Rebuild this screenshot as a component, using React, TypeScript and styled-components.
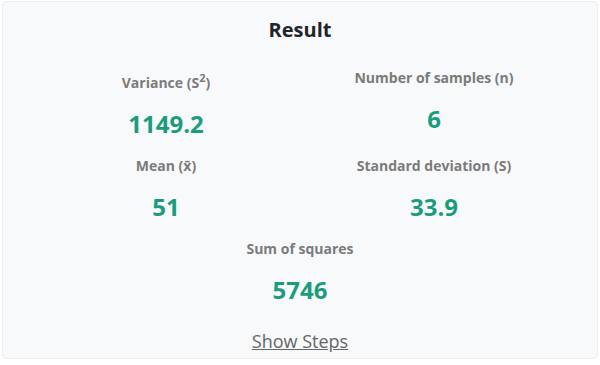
import styled, { createGlobalStyle } from "styled-components";

const GlobalStyle = createGlobalStyle`
  html, body {
    margin: 0;
    padding: 0;
    background: #ffffff;
  }
  body {
    font-family: "Open Sans", "Liberation Sans", sans-serif;
  }
  #root {
    padding: 1px 2px 0 2px;
  }
`;

type Stat = {
  label: React.ReactNode;
  value: string;
  wide?: boolean;
};

const stats: Stat[] = [
  {
    label: (
      <>
        Variance (S<sup>2</sup>)
      </>
    ),
    value: "1149.2",
  },
  { label: "Number of samples (n)", value: "6" },
  { label: "Mean (x\u0304)", value: "51" },
  { label: "Standard deviation (S)", value: "33.9" },
  { label: "Sum of squares", value: "5746", wide: true },
];

const App = () => {
  return (
    <>
      <GlobalStyle />
      <Card>
        <Title>Result</Title>
        <StatGrid>
          {stats.map((s, i) => (
            <StatCell key={i} wide={s.wide}>
              <Label>{s.label}</Label>
              <Value>{s.value}</Value>
            </StatCell>
          ))}
        </StatGrid>
        <StepsLink href="#">Show Steps</StepsLink>
      </Card>
    </>
  );
};

export default App;

const Card = styled.div`
  width: 596px;
  height: 358px;
  box-sizing: border-box;
  background-color: #f8f9fa;
  border: 1px solid #eceef0;
  border-radius: 4px;
  padding: 13px 29px 0 29px;
  display: flex;
  flex-direction: column;
  align-items: center;
`;

const Title = styled.h2`
  margin: 0;
  font-size: 20px;
  line-height: 30px;
  font-weight: 700;
  color: #212529;
`;

const StatGrid = styled.div`
  width: 100%;
  margin-top: 22px;
  display: grid;
  grid-template-columns: 1fr 1fr;
  row-gap: 13px;
`;

const StatCell = styled.div<{ wide?: boolean }>`
  display: flex;
  flex-direction: column;
  align-items: center;
  text-align: center;
  ${(props) => (props.wide ? "grid-column: 1 / span 2;" : "")}
`;

const Label = styled.div`
  font-size: 14px;
  line-height: 21px;
  font-weight: 700;
  color: #7b7b7b;

  sup {
    font-size: 11px;
  }
`;

const Value = styled.div`
  margin-top: 13px;
  font-size: 24px;
  line-height: 36px;
  font-weight: 700;
  color: #1b9c7d;
`;

const StepsLink = styled.a`
  margin-top: 20px;
  font-size: 18px;
  line-height: 27px;
  color: #666666;
  text-decoration: underline;
`;
